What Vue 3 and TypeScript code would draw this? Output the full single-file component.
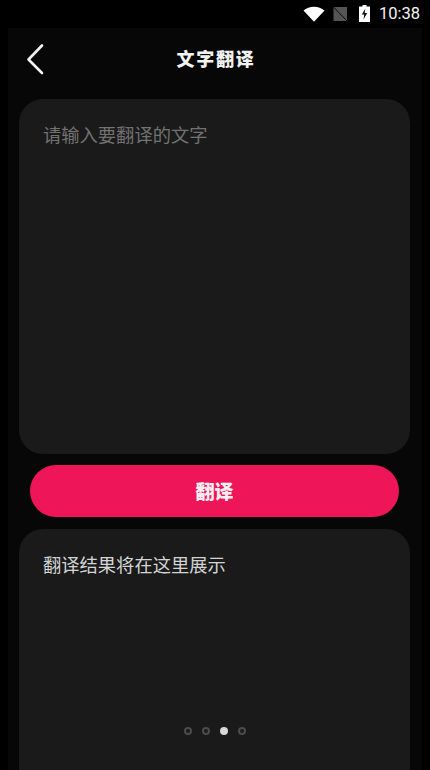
<script setup lang="ts">
const dots = [false, false, true, false]
</script>

<template>
  <div class="screen">
    <div class="status">
      <svg class="wifi" width="22" height="16" viewBox="0 0 22 16"><path d="M0.5 4.6C3.4 2.2 7 0.8 11 0.8s7.600 1.400 10.500 3.800L11 15.800z" fill="#fff"/></svg>
      <svg class="sim" width="16" height="16" viewBox="0 0 16 16"><path d="M1.500 1H15v14H1.500z" fill="#555"/><path d="M1 0.500L15.500 15.500" stroke="#0a0a0a" stroke-width="1"/></svg>
      <svg class="battery" width="11" height="17" viewBox="0 0 11 17"><path d="M3.500 0h4v1.500H11V17H0V1.500h3.500z" fill="#fff"/><path d="M6.300 3.500L2.800 9.500h2.400L4.500 14.500l3.700-6.500H5.700z" fill="#111"/></svg>
      <span class="clock">10:38</span>
    </div>
    <div class="panel">
      <header class="nav">
        <svg class="back" width="20" height="32" viewBox="0 0 20 32"><path d="M17 2.500L3.500 16.500 17 30" fill="none" stroke="#f2f2f2" stroke-width="2.600" stroke-linecap="round" stroke-linejoin="round"/></svg>
        <h1 class="title">文字翻译</h1>
      </header>
      <main class="content">
        <section class="card input-card">
          <p class="placeholder">请输入要翻译的文字</p>
        </section>
        <button class="action" type="button">翻译</button>
        <section class="card result-card">
          <p class="result">翻译结果将在这里展示</p>
        </section>
      </main>
    </div>
    <div class="dots">
      <i v-for="(on, i) in dots" :key="i" :class="['dot', { on }]"></i>
    </div>
  </div>
</template>

<style>
html, body { margin: 0; background: #000; }
</style>

<style scoped>
.screen {
  position: relative;
  width: 430px;
  height: 770px;
  overflow: hidden;
  background: #000;
  display: flex;
  flex-direction: column;
  font-family: "Noto Sans CJK SC", "Noto Sans", sans-serif;
}
.status {
  height: 28px;
  flex: none;
  display: flex;
  align-items: center;
  justify-content: flex-end;
  padding: 0 10px 0 0;
  box-sizing: border-box;
}
.wifi { margin-right: 7px; margin-top: -1px; }
.sim { margin-right: 11px; margin-top: -1px; }
.battery { margin-right: 9px; margin-top: -1px; }
.clock {
  font-family: Roboto, sans-serif;
  font-size: 16.500px;
  color: #f4f4f4;
  line-height: 28px;
  margin-top: -1px;
}
.panel {
  flex: 1;
  margin: 0 8px;
  background: #070707;
  display: flex;
  flex-direction: column;
  min-height: 0;
}
.nav {
  height: 71px;
  flex: none;
  position: relative;
  display: flex;
  align-items: center;
  justify-content: center;
}
.back { position: absolute; left: 17px; top: 15px; }
.title {
  margin: 0 0 11px 2px;
  font-size: 18px;
  font-weight: 900;
  color: #f2f2f2;
  letter-spacing: 1.700px;
  line-height: 1;
}
.content {
  flex: 1;
  min-height: 0;
  display: flex;
  flex-direction: column;
  padding: 0 12px 0 11px;
  gap: 11px;
}
.card {
  background: #1a1a1a;
  border-radius: 24px;
  box-sizing: border-box;
  padding: 22px 24px 0;
}
.input-card { height: 355px; flex: none; }
.result-card { flex: 1; margin-top: 1px; border-radius: 24px 24px 0 0; }
.placeholder, .result {
  margin: 0;
  font-size: 18.300px;
  line-height: 26px;
}
.placeholder { color: #727272; }
.result { color: #d4d4d4; }
.action {
  flex: none;
  align-self: center;
  width: 369px;
  height: 52px;
  border: 0;
  padding: 0 0 2px;
  border-radius: 26px;
  background: #ef1559;
  color: #f6f0f2;
  font-family: inherit;
  font-size: 19px;
  font-weight: 900;
}
.dots {
  position: absolute;
  left: 184px;
  top: 727px;
  display: flex;
  gap: 10px;
}
.dot {
  width: 8px;
  height: 8px;
  box-sizing: border-box;
  border-radius: 50%;
  border: 2px solid #4c4c4c;
}
.dot.on { background: #d8d8d8; border-color: #d8d8d8; }
</style>
